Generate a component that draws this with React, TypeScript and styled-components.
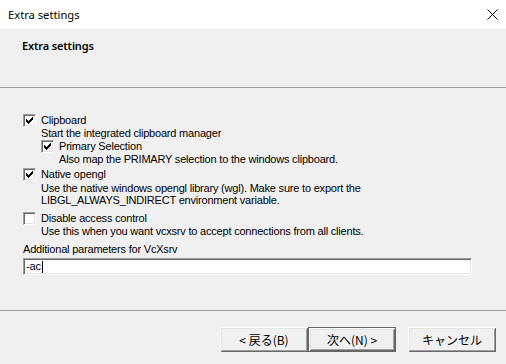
import styled, { createGlobalStyle } from "styled-components";

const GlobalStyle = createGlobalStyle`
  html, body {
    margin: 0;
    padding: 0;
    background: #f0f0f0;
  }
  * {
    box-sizing: border-box;
  }
`;

const Window = styled.div`
  width: 506px;
  height: 364px;
  background: #f0f0f0;
  display: flex;
  flex-direction: column;
  overflow: hidden;
`;

const TitleBar = styled.div`
  height: 29px;
  background: #ffffff;
  display: flex;
  align-items: center;
  justify-content: space-between;
  padding: 0 8px;
  font: 11.2px "Segoe UI", "Noto Sans", sans-serif;
  color: #000;
`;

const CloseIcon = styled.svg`
  width: 11px;
  height: 11px;
  margin-top: -1px;
`;

const Header = styled.div`
  height: 59px;
  padding: 10px 22px 0;
  border-bottom: 1px solid #a0a0a0;
  font: 600 11px "Segoe UI", "Noto Sans", sans-serif;
  letter-spacing: -0.15px;
  line-height: 14px;
  color: #000;
`;

const Content = styled.div`
  height: 222px;
  padding: 26px 0 0 23px;
  font: 11px "Liberation Sans", Arial, sans-serif;
  letter-spacing: -0.2px;
  color: #000;
  display: flex;
  flex-direction: column;
`;

const Group = styled.div<{ $top?: number; $indent?: number }>`
  margin-top: ${(p) => p.$top ?? 0}px;
  margin-left: ${(p) => p.$indent ?? 0}px;
`;

const CheckRow = styled.div`
  display: flex;
  align-items: center;
  gap: 5px;
  height: 13px;
  line-height: 13px;
`;

const Box = styled.div`
  width: 13px;
  height: 13px;
  flex: none;
  background: #fff;
  border-top: 1px solid #a0a0a0;
  border-left: 1px solid #a0a0a0;
  border-right: 1px solid #fff;
  border-bottom: 1px solid #fff;
  box-shadow: inset 1px 1px #696969, inset -1px -1px #e3e3e3;
  display: flex;
  align-items: center;
  justify-content: center;
`;

const Desc = styled.div<{ $top?: number }>`
  padding-left: 18px;
  margin-top: ${(p) => p.$top ?? 0}px;
  line-height: 12px;
`;

const FieldLabel = styled.div`
  margin-top: 6px;
  line-height: 12px;
`;

const TextField = styled.div`
  margin-top: 3px;
  width: 449px;
  height: 17px;
  background: #fff;
  border-top: 1px solid #a0a0a0;
  border-left: 1px solid #a0a0a0;
  border-right: 1px solid #fff;
  border-bottom: 1px solid #fff;
  box-shadow: inset 1px 1px #696969, inset -1px -1px #e3e3e3;
  padding: 0 2px;
  line-height: 15px;
  display: flex;
  align-items: center;
`;

const Caret = styled.span`
  display: inline-block;
  width: 1px;
  height: 12px;
  background: #000;
  margin-left: 1px;
`;

const Footer = styled.div`
  flex: 1;
  border-top: 1px solid #a0a0a0;
  display: flex;
  justify-content: flex-end;
  align-items: flex-start;
  padding: 16px 10px 0 0;
`;

const Button = styled.button<{ $default?: boolean; $gap?: number }>`
  width: 88px;
  height: 25px;
  margin: 0 0 0 ${(p) => p.$gap ?? 0}px;
  padding: 0;
  background: #f0f0f0;
  font: 12px "Noto Sans CJK JP", "Noto Sans", sans-serif;
  color: #000;
  border: ${(p) => (p.$default ? "1px solid #646464" : "none")};
  box-shadow: inset 1px 1px #ffffff, inset -1px -1px #696969,
    inset 2px 2px #e3e3e3, inset -2px -2px #a0a0a0;
  display: flex;
  align-items: center;
  justify-content: center;
`;

const checkPattern = [
  "......#",
  ".....##",
  "#...###",
  "##.###.",
  "#####..",
  ".###...",
  "..#....",
];

function CheckMark() {
  return (
    <svg width="7" height="7" viewBox="0 0 7 7" shapeRendering="crispEdges">
      {checkPattern.flatMap((row, y) =>
        row
          .split("")
          .map((c, x) =>
            c === "#" ? (
              <rect key={`${x}-${y}`} x={x} y={y} width="1" height="1" fill="#000" />
            ) : null
          )
      )}
    </svg>
  );
}

function Option({ checked, label }: { checked: boolean; label: string }) {
  return (
    <CheckRow>
      <Box>{checked && <CheckMark />}</Box>
      <span>{label}</span>
    </CheckRow>
  );
}

export default function App() {
  return (
    <>
      <GlobalStyle />
      <Window>
        <TitleBar>
          <span>Extra settings</span>
          <CloseIcon viewBox="0 0 11 11">
            <path d="M0.5 0.5 L10.5 10.5 M10.5 0.5 L0.5 10.5" stroke="#000" strokeWidth="1" />
          </CloseIcon>
        </TitleBar>
        <Header>Extra settings</Header>
        <Content>
          <Group>
            <Option checked label="Clipboard" />
            <Desc>Start the integrated clipboard manager</Desc>
            <Group $top={1} $indent={18}>
              <Option checked label="Primary Selection" />
              <Desc>Also map the PRIMARY selection to the windows clipboard.</Desc>
            </Group>
          </Group>
          <Group $top={3}>
            <Option checked label="Native opengl" />
            <Desc $top={1}>
              Use the native windows opengl library (wgl). Make sure to export the
              <br />
              LIBGL_ALWAYS_INDIRECT environment variable.
            </Desc>
          </Group>
          <Group $top={6}>
            <Option checked={false} label="Disable access control" />
            <Desc>Use this when you want vcxsrv to accept connections from all clients.</Desc>
          </Group>
          <FieldLabel>Additional parameters for VcXsrv</FieldLabel>
          <TextField>
            -ac
            <Caret />
          </TextField>
        </Content>
        <Footer>
          <Button>&lt; 戻る(B)</Button>
          <Button $default>次へ(N) &gt;</Button>
          <Button $gap={12}>キャンセル</Button>
        </Footer>
      </Window>
    </>
  );
}
